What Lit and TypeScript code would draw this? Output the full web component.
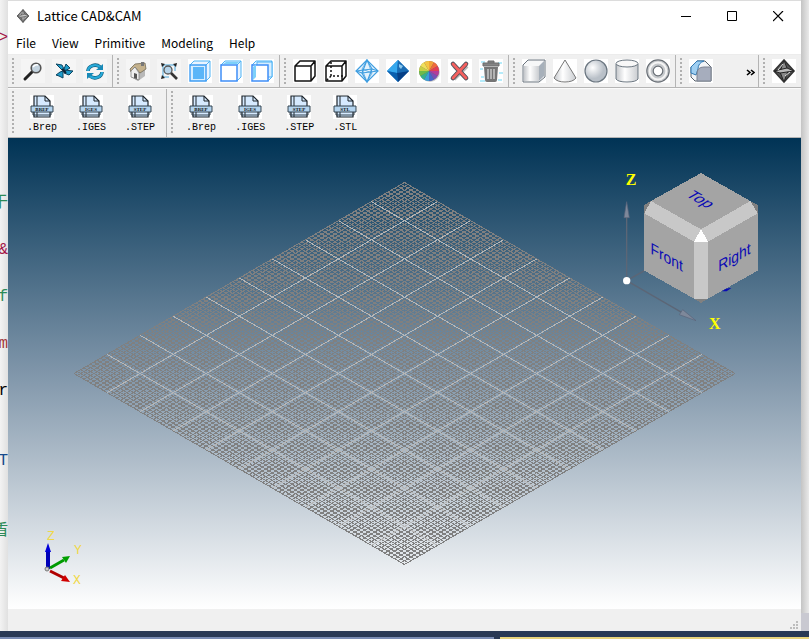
import { LitElement, html, svg, css, TemplateResult } from "lit";
import { customElement } from "lit/decorators.js";

type Glyph = TemplateResult;

const icon = (body: Glyph, label = "") => html`<svg class="icon" viewBox="0 0 24 24" role="img" aria-label=${label}>${body}</svg>`;

const frame = (panel: Glyph) => svg`
  <path d="M2 6L6 2H22V18L18 22" fill="#e9f4ff" stroke="#4fb4f5"/>
  <path d="M18 6L22 2" stroke="#4fb4f5"/>
  ${panel}`;

const octa = (dark: boolean) => dark
  ? svg`<path d="M12 1L1 12L12 23L23 12Z" fill="#1679c6"/><path d="M12 1L1 12L11 14Z" fill="#35a8ee"/><path d="M12 1L11 14L23 12Z" fill="#1a6cb4"/><path d="M1 12L12 23L11 14Z" fill="#0a5fae"/><path d="M23 12L12 23L11 14Z" fill="#063f86"/><path d="M13 5L17 7L15 10L13 8Z" fill="#8cc8ee"/>`
  : svg`<g fill="#e4f2fc" stroke="#3f9ee0" stroke-width="1.2"><path d="M12 1L1 12L12 23L23 12Z"/><path d="M12 1L7 14L12 23L17 10Z" fill="none"/><path d="M1 12L7 14L23 12L17 10Z" fill="none"/><path d="M12 1L17 14L12 23M12 1L7 10L12 23M7 10L17 14" fill="none" stroke-width=".7"/></g>`;

const wire = (dashed: boolean) => svg`
  <path d="M2 7H18V22H2ZM2 7L7 2H22V17L18 22M18 7L22 2" fill="none" stroke="#111" stroke-width="1.5" stroke-linejoin="round"/>
  ${dashed ? svg`<path d="M7 3V17H21M7 17L2 22" fill="none" stroke="#111" stroke-width="1.5" stroke-dasharray="2 2"/>` : ""}`;

const lattice = svg`<path d="M12 1L22 12L12 23L2 12Z" fill="#555"/><path d="M12 1L16 12L12 23L8 13Z" fill="#888" stroke="#222"/><path d="M12 1L2 12L12 23L22 12Z" fill="none" stroke="#333" stroke-width="1.6"/><path d="M2 12L8 14L22 12L15 9Z" fill="#bbb" stroke="#222"/><path d="M11 5L6 11M13 17L18 13" stroke="#ddd"/>`;

const wheelColors = ["#f2a33a", "#ef6b3c", "#e23e57", "#b33c9a", "#7a4fb5", "#4667c8", "#39a0d8", "#35b08e", "#6dbb4a", "#c7cf45", "#f0df5a", "#f4c545"];
const wheel = () => wheelColors.map((c, i) => {
  const p = (k: number) => {
    const a = (k * Math.PI) / 6;
    return `${12 + 10 * Math.sin(a)} ${12 - 10 * Math.cos(a)}`;
  };
  return svg`<path d="M12 12L${p(i)}A10 10 0 0 1 ${p(i + 1)}Z" fill=${c}/>`;
});

const shade = svg`<defs>
  <linearGradient id="g"><stop stop-color="#c3c6ca"/><stop offset=".4" stop-color="#fff"/><stop offset="1" stop-color="#c9ccd0"/></linearGradient>
  <radialGradient id="s" cx=".35" cy=".35"><stop stop-color="#fff"/><stop offset="1" stop-color="#b9c0c8"/></radialGradient></defs>`;

const glyphs: Record<string, Glyph> = {
  Find: svg`<path d="M4 20L11 13" stroke="#222" stroke-width="3" stroke-linecap="round"/><circle cx="15" cy="9" r="4.800" fill="#c3d3df" stroke="#555" stroke-width="1.6"/><path d="M12 8Q14 5 17 6" stroke="#fff" stroke-width="1.5" fill="none"/>`,
  Pan: svg`<g fill="#1f9dcc" stroke="#0c4460"><path d="M10 11L4 5L10 6L12 10ZM12 10L14 5L18 9L13 12ZM12 11L21 12L17 16L12 14ZM11 12L11 19L7 17L4 16L8 13Z"/></g><path d="M10 10L14 14" stroke="#123" stroke-width="2"/>`,
  Refresh: svg`<path d="M5 12A7 6 0 0 1 17 8" fill="none" stroke="#0d5877" stroke-width="3.6"/><path d="M5 12A7 6 0 0 1 17 8" fill="none" stroke="#28a9d8" stroke-width="2.4"/><path d="M20 5V11H13Z" fill="#188ab8"/><path d="M19 13A7 6 0 0 1 7 17" fill="none" stroke="#0d5877" stroke-width="3.6"/><path d="M19 13A7 6 0 0 1 7 17" fill="none" stroke="#28a9d8" stroke-width="2.4"/><path d="M4 20V14H11Z" fill="#188ab8"/>`,
  Home: svg`<path d="M5 11L12 14V22L5 18Z" fill="#a5a5a5"/><path d="M12 14L19 9V17L12 22Z" fill="#b9b9b9"/><path d="M4 10L9 5L19 4L20 10L14 14L9 8L5 13Z" fill="#c4b18c" stroke="#746b58" stroke-width=".8"/><path d="M5 12L9 8L13 14V21L5 18Z" fill="#eee" stroke="#777" stroke-width=".7"/><path d="M8 14L11 15V20L8 19Z" fill="#555"/><path d="M15 3H18V7H15Z" fill="#777"/>`,
  Fit: svg`<path d="M6 6H18M6 6V18M18 6V12M6 18H12" stroke="#48a4d9" fill="none"/><path d="M4 4L8 5L5 8ZM20 4L16 5L19 8ZM4 20L5 16L8 19Z" fill="#222"/><circle cx="11" cy="11" r="4" fill="#b6d4ea" stroke="#555" stroke-width="1.3"/><path d="M14 14L20 20" stroke="#333" stroke-width="2.6"/>`,
  "Front view": frame(svg`<path d="M2 6H18V22H2Z" fill="#d7eeff" stroke="#3f9df4" stroke-width="1.4"/><path d="M5 8H16V20H5Z" fill="#5ab5f8"/>`),
  "Top view": frame(svg`<path d="M2 6H18V22H2Z" fill="#fff" stroke="#3f8ff8" stroke-width="1.5"/><path d="M4 5L7 3H20L18 5Z" fill="#7cd0fa"/>`),
  "Left view": frame(svg`<path d="M7 3H22V18H7Z" fill="#d7eeff" stroke="#4fb4f5"/><path d="M2 6H18V22H2Z" fill="#fff" stroke="#3f8ff8" stroke-width="1.5"/><path d="M3 8L6 5V18L3 21Z" fill="#7cd0fa"/>`),
  Wireframe: wire(false),
  "Hidden lines": wire(true),
  Mesh: octa(false),
  Shaded: octa(true),
  Colour: svg`<circle cx="13" cy="13" r="10" fill="#ccc"/><circle cx="12" cy="12" r="10" fill="#666"/>${wheel()}`,
  Remove: svg`<path d="M6 7L19 20M19 7L6 20" stroke="#bbb" stroke-width="4"/><path d="M5 5L18 19M18 5L5 19" stroke="#4a4f5c" stroke-width="4.6" stroke-linecap="round"/><path d="M5 5L18 19M18 5L5 19" stroke="#f4605f" stroke-width="2.8" stroke-linecap="round"/>`,
  Delete: svg`<path d="M2 3H6M1 10H4M20 14H24M2 18H5M19 4H23M1 22H6M19 21H23" stroke="#b5ebfa" stroke-width="2"/><path d="M5 8H19L18 21Q18 23 16 23H8Q6 23 6 21Z" fill="#757575"/><path d="M4 4H20V7H4ZM9 4V2H15V4" fill="#858585" stroke="#6d6d6d"/><path d="M9 10V20M12 10V20M15 10V20" stroke="#c8c8c8" stroke-width="1.5"/>`,
  Box: svg`${shade}<path d="M1 6L6 1H23V18L17 23H1Z" fill="#f6f7f8" stroke="#69737d"/><path d="M2 7H17V22H2Z" fill="url(#g)"/><path d="M17 7L22 2V17L17 22Z" fill="#a7b0ba"/>`,
  Cone: svg`${shade}<path d="M12 1L1 19Q4 23 12 23T23 19Z" fill="url(#g)" stroke="#777"/>`,
  Sphere: svg`${shade}<circle cx="12" cy="12" r="11" fill="url(#s)" stroke="#6b7680" stroke-width="1.2"/>`,
  Cylinder: svg`${shade}<path d="M1 5V20Q3 23 12 23T23 20V5" fill="url(#g)" stroke="#6b7680"/><ellipse cx="12" cy="4.5" rx="11" ry="3.5" fill="#f8f8f8" stroke="#6b7680"/>`,
  Torus: svg`<circle cx="12" cy="12" r="8" fill="none" stroke="#686e75" stroke-width="7.6"/><circle cx="12" cy="12" r="8" fill="none" stroke="#c6c9cc" stroke-width="5.2"/><circle cx="12" cy="12" r="8.4" fill="none" stroke="#f5f5f5" stroke-width="2"/>`,
  Fillet: svg`<path d="M2 8L8 2H16L22 8V22H6L2 18Z" fill="#f3f5f8" stroke="#59626c"/><path d="M2 14V8L8 2H15Q9 4 9 10L7 16Z" fill="#9fcff2" stroke="#3179b4"/><path d="M8 22V15Q8 8 15 8H22V22Z" fill="#a6adbd" stroke="#7c8391"/>`,
  Lattice: lattice,
};

const fileIcon = (kind: string) => svg`
  <path d="M4 1H15L20 6V22H4Z" fill="#d6eaff" stroke="#1d242b" stroke-width="1.2"/>
  <path d="M7 1V22M15 1V6H20" fill="none" stroke="#1d242b"/>
  <path d="M1 11H23V17H1Z" fill="#b4d4ef" stroke="#33424f"/>
  <path d="M3 17V20H21V17" fill="none" stroke="#33424f"/>
  <text x="12" y="16" class="tiny" text-anchor="middle">${kind}</text>`;

const groups: string[][] = [
  ["Find", "Pan", "Refresh"],
  ["Home", "Fit", "Front view", "Top view", "Left view"],
  ["Wireframe", "Hidden lines", "Mesh", "Shaded", "Colour", "Remove", "Delete"],
  ["Box", "Cone", "Sphere", "Cylinder", "Torus"],
  ["Fillet"],
  ["Lattice"],
];
const fileGroups = [["Brep", "IGES", "STEP"], ["Brep", "IGES", "STEP", "STL"]];
const plain = new Set(["Find", "Pan", "Refresh", "Home", "Fit"]);

/** Isometric ground plane: 100 cells a side, every tenth line emphasised. */
function gridPath(major: boolean): string {
  const cx = 396.5, cy = 235.5, w = 330.5, h = 191;
  let d = "";
  for (let i = 0; i <= 100; i++) {
    const strong = i % 10 === 0 && i > 0 && i < 100;
    if (strong !== major) continue;
    const x = (w * i) / 100, y = (h * i) / 100;
    d += `M${cx - x} ${cy - h + y}L${cx + w - x} ${cy + y}`;
    d += `M${cx + x} ${cy - h + y}L${cx - w + x} ${cy + y}`;
  }
  return d;
}

@customElement("app-root")
export class AppRoot extends LitElement {
  static styles = css`
    :host { display: grid; grid-template: minmax(0, 1fr) 8px / 8px minmax(0, 1fr) 8px; height: 100vh; overflow: hidden; background: #f0f0f0; }
    button { border: 0; padding: 0; background: none; color: inherit; font: inherit; }
    .behind { display: flex; flex-direction: column; overflow: hidden; background: linear-gradient(90deg, #f3f3f3, #e0e0e0); font: 16px/20px "Liberation Mono", "Noto Sans CJK SC", monospace; }
    .code { display: flex; flex: none; justify-content: flex-end; height: 20px; margin-bottom: 27px; }
    .code.first { margin: 28px 0 145px; }
    .code.wide { margin-bottom: 50px; }
    .red { color: #a31545; } .brown { color: #a33a3a; } .green { color: #2c8a57; } .blue { color: #174a8b; }
    .right { display: flex; flex-direction: column; background: linear-gradient(90deg, #c4c4c4, #e9e9e9); }
    .right i { height: 18px; margin-top: auto; background: #c9c9d1; }
    .taskbar { grid-column: 1 / 4; display: flex; align-items: flex-end; gap: 6px; background: #293955; }
    .taskbar i { height: 2px; width: 494px; background: #7a8cb4; }
    .taskbar i + i { flex: 1; background: #e8d47c; }
    .window { display: flex; flex-direction: column; min-width: 0; border-top: 1px solid #dcdcdc; box-sizing: border-box; background: #fff; font: 12px/18px "Noto Sans CJK SC", sans-serif; color: #000; }
    .title { display: flex; align-items: center; height: 30px; padding-left: 8px; font-size: 13px; }
    .logo { width: 14px; height: 14px; margin-right: 7px; opacity: .8; }
    h1 { flex: 1; margin: 0; font: inherit; }
    .title button { width: 46px; height: 30px; }
    .title button svg { display: block; margin: auto; }
    .menu { display: flex; gap: 16px; height: 24px; padding-left: 8px; border-bottom: 1px solid #ececec; box-sizing: border-box; }
    .bar { display: flex; flex: none; background: #f0f0f0; border-bottom: 1px solid #b4b4b4; box-sizing: border-box; }
    .main { height: 33px; }
    .files { height: 50px; border-top: 1px solid #fafafa; }
    .group { display: flex; align-items: center; gap: 7px; box-sizing: border-box; padding: 0 5px 0 4px; border-right: 1px solid #b4b4b4; }
    .group:last-child { border-right: 0; }
    .grow { flex: 1; }
    .handle { width: 2px; height: 26px; background: repeating-linear-gradient(#b0b0b0 0 2px, transparent 2px 4px); }
    .more { margin-left: auto; margin-right: -2px; }
    .icon { display: block; width: 24px; height: 24px; background: #fff; }
    .plain .icon { background: #f5f5f5; }
    .files .group { gap: 19px; padding: 0 11px 0 4px; }
    .files .handle { height: 44px; margin-right: -6px; }
    .file { display: grid; justify-items: center; gap: 2px; padding-top: 3px; font: 10px/14px "Liberation Mono", monospace; }
    .tiny { font: bold 5px "Liberation Serif", serif; fill: #111; }
    .view { position: relative; flex: 1; min-height: 0; overflow: hidden; background: linear-gradient(#003355, #8096aa 50%, #ffffff); }
    .grid { display: block; width: 100%; height: 100%; }
    .grid path { fill: none; shape-rendering: crispEdges; }
    .minor { stroke: #808080; } .major { stroke: #b6b6b6; }
    .cube { position: absolute; top: 12px; right: 0; width: 209px; height: 190px; margin-right: -8px; }
    .cube polygon { shape-rendering: crispEdges; }
    .face { fill: #a4a4a4; } .edge { fill: #c8c8c8; } .back { fill: #808080; } .tip { fill: #fff; }
    .cube text { font: 48px "Liberation Sans", sans-serif; fill: #0a0ab4; text-anchor: middle; }
    .cube .axis { font: bold 48px "Liberation Serif", serif; fill: #ff0; }
    .triad { position: absolute; left: 32px; bottom: 16px; width: 48px; height: 64px; }
    .triad text { font: 13px "Liberation Mono", monospace; fill: #f0d848; }
    .status { display: flex; flex: none; justify-content: flex-end; align-items: flex-end; height: 22px; background: #f0f0f0; }
    .status svg { width: 8px; height: 8px; margin: 0 3px 2px 0; }
  `;

  render() {
    return html`
      <div class="behind" aria-hidden="true">
        <div class="code first red">t&gt;</div>
        <div class="code green">于</div><div class="code red">D&amp;</div>
        <div class="code green">f</div><div class="code brown">rm</div>
        <div class="code wide">Tr</div><div class="code wide blue">aT</div><div class="code green">盾</div>
      </div>
      <main class="window">
        <header class="title">
          <svg class="logo" viewBox="0 0 24 24">${lattice}</svg>
          <h1>Lattice CAD&amp;CAM</h1>
          <button aria-label="Minimize"><svg width="11" height="11"><path d="M0 5.5H10" stroke="#000"/></svg></button>
          <button aria-label="Maximize"><svg width="11" height="11"><path d="M.5 .5H9.5V9.5H.5Z" fill="none" stroke="#000"/></svg></button>
          <button aria-label="Close"><svg width="11" height="11"><path d="M0 0L10 10M10 0L0 10" stroke="#000" stroke-width="1.2"/></svg></button>
        </header>
        <nav class="menu">${["File", "View", "Primitive", "Modeling", "Help"].map((m) => html`<button>${m}</button>`)}</nav>
        <div class="bar main" role="toolbar">
          ${groups.map((g) => html`<div class="group ${g[0] === "Fillet" ? "grow" : ""}">
            <span class="handle"></span>
            ${g.map((n) => html`<button class=${plain.has(n) ? "plain" : ""} aria-label=${n}>${icon(glyphs[n], n)}</button>`)}
            ${g[0] === "Fillet" ? html`<button class="more" aria-label="More tools"><svg width="9" height="7" viewBox="0 0 9 7"><path d="M1 1L4 3.5L1 6M5 1L8 3.5L5 6" fill="none" stroke="#000" stroke-width="1.6"/></svg></button>` : ""}
          </div>`)}
        </div>
        <div class="bar files" role="toolbar">
          ${fileGroups.map((g, i) => html`<div class="group ${i ? "grow" : ""}">
            <span class="handle"></span>
            ${g.map((n) => html`<button class="file">${icon(fileIcon(n.toUpperCase()), n)}<span>.${n}</span></button>`)}
          </div>`)}
        </div>
        <section class="view">
          <svg class="grid" viewBox="0 0 793 471"><path class="minor" d=${gridPath(false)} /><path class="major" d=${gridPath(true)} /></svg>
          <svg class="cube" viewBox="0 0 627 570">
            <path d="M80 392V200M80 392L250 490M80 392L140 358" stroke="#5c6676" stroke-width="4" fill="none"/>
            <path d="M80 155L88 203H72ZM288 512L238 494L248 479Z" fill="#7e889a" stroke="#59647a" stroke-width="2"/>
            <circle cx="80" cy="392" r="11" fill="#fff"/>
            <polygon class="back" points="133,165 153,153 133,190"/><polygon class="back" points="473,165 451,153 473,190"/>
            <polygon class="back" points="282,446 324,446 303,459"/>
            <polygon class="face" points="303,69 153,153 303,238 451,153"/>
            <polygon class="face" points="133,190 133,362 282,446 282,275"/>
            <polygon class="face" points="473,190 473,362 324,446 324,275"/>
            <polygon class="edge" points="153,153 133,190 282,275 303,238"/>
            <polygon class="edge" points="451,153 473,190 324,275 303,238"/>
            <polygon class="edge" points="282,275 324,275 324,446 282,446"/>
            <polygon class="tip" points="303,238 324,275 282,275"/>
            <path d="M366 424Q380 412 394 414L380 424Z" fill="#0a0ab4"/>
            <text transform="matrix(.866 .5 -.866 .5 288 156)">Top</text>
            <text transform="matrix(.866 .5 0 1 200 338)">Front</text>
            <text transform="matrix(.866 -.5 0 1 403 338)">Right</text>
            <text class="axis" x="93" y="105">Z</text><text class="axis" x="344" y="537">X</text>
          </svg>
          <svg class="triad" viewBox="0 0 48 64">
            <path d="M8 40V22" stroke="#0000b8" stroke-width="4"/><path d="M8 14L11 23H5Z" fill="#0000d8"/>
            <path d="M10 39L24 31" stroke="#009a00" stroke-width="3"/><path d="M30 27L26 34L22 28Z" fill="#00a000"/>
            <path d="M10 42L24 49" stroke="#b00000" stroke-width="3"/><path d="M30 53L21 52L25 46Z" fill="#d00000"/>
            <circle cx="7" cy="40" r="2" fill="#ccc" stroke="#777"/>
            <text x="7" y="11">Z</text><text x="34" y="25">Y</text><text x="33" y="55">X</text>
          </svg>
        </section>
        <footer class="status"><svg viewBox="0 0 8 8"><path d="M6 0h2v2h-2zM6 3h2v2h-2zM3 3h2v2h-2zM6 6h2v2h-2zM3 6h2v2h-2zM0 6h2v2h-2z" fill="#bdbdbd"/></svg></footer>
      </main>
      <div class="right"><i></i></div>
      <div class="taskbar"><i></i><i></i></div>
    `;
  }
}
